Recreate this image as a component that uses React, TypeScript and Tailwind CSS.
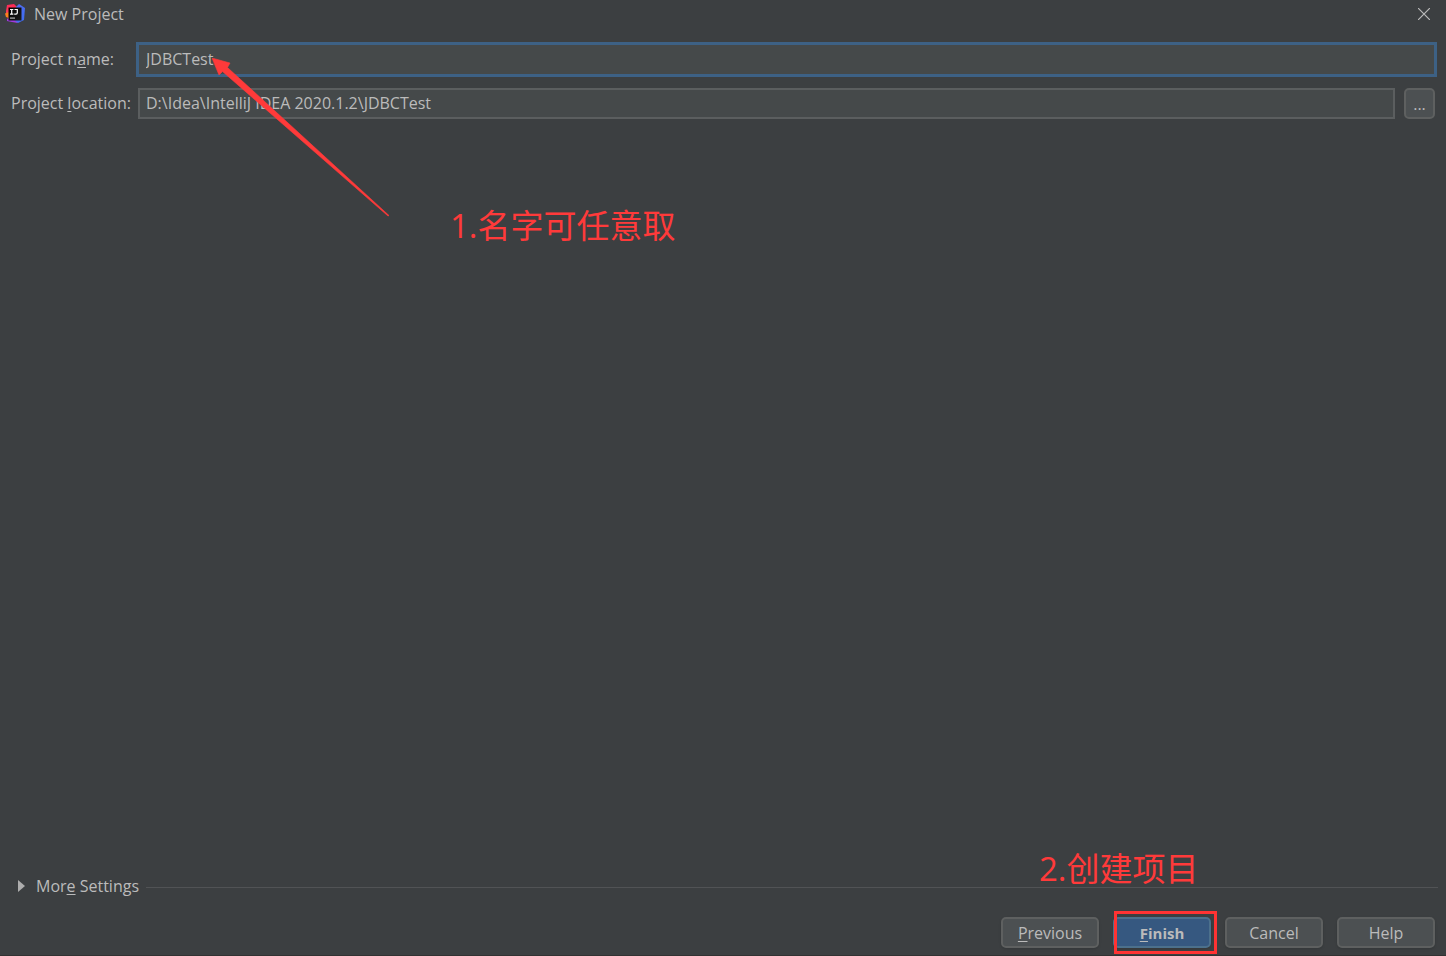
import type { ReactNode } from 'react';

function Key({ children }: { children: ReactNode }) {
  return <span className="underline decoration-1 underline-offset-2">{children}</span>;
}

function AppLogo() {
  return (
    <svg viewBox="0 0 20 20" className="size-5 shrink-0" aria-hidden="true">
      <defs>
        <linearGradient id="warm" x1="0" y1="0" x2="0" y2="1">
          <stop offset="0" stopColor="#fe2857" />
          <stop offset="0.55" stopColor="#f9405a" />
          <stop offset="1" stopColor="#a03bd8" />
        </linearGradient>
        <linearGradient id="cool" x1="0" y1="0" x2="1" y2="1">
          <stop offset="0" stopColor="#5a6cf0" />
          <stop offset="1" stopColor="#3a6cf0" />
        </linearGradient>
        <linearGradient id="tile" x1="0" y1="0" x2="1" y2="1">
          <stop offset="0" stopColor="#000" />
          <stop offset="1" stopColor="#1c1c1c" />
        </linearGradient>
      </defs>
      <path d="M2 1 9 0l4 4-2 12-9 1 1-4-2-2 0-4z" fill="url(#warm)" />
      <path d="M0 9.500 4 8v6l-3-1z" fill="#fc801d" />
      <path d="M11 3 14 0l6 4-1 12-6 3-4-2z" fill="url(#cool)" />
      <path d="M2 15h6l5 4-6-1-5-1z" fill="#a13be0" />
      <path d="M3.500 3.500h13v13h-13z" fill="url(#tile)" />
      <path d="M5 5.500h3.400M6.700 5.500v4.600M5 10.100h3.400M9.500 5.500h2.800v3.300q0 1.300-1.300 1.300H9.200" fill="none" stroke="#fff" strokeWidth="1.200" />
      <path d="M5 13.500h5v1.200H5z" fill="#b5b5b5" />
    </svg>
  );
}

function DialogButton({ children, primary = false }: { children: ReactNode; primary?: boolean }) {
  const look = primary
    ? 'border-[#4c708c] bg-[#365880] text-[15px] font-bold'
    : 'border-[#5e6060] bg-[#4c5052]';
  return (
    <button type="button" className={`h-[31px] w-[98px] rounded-[5px] border-2 leading-5 shadow-sm ${look}`}>
      {children}
    </button>
  );
}

export default function App() {
  return (
    <main className="flex min-h-screen flex-col overflow-hidden border-b border-[#323232] bg-[#3c3f41] font-['Open_Sans','Noto_Sans_CJK_SC',sans-serif] text-base leading-5 text-[#bbbbbb]">
      <header className="flex h-7 items-center pl-[5px] pr-4">
        <AppLogo />
        <h1 className="ml-[9px]">New Project</h1>
        <button type="button" aria-label="Close" className="ml-auto">
          <svg viewBox="0 0 12 12" className="size-3" aria-hidden="true">
            <path d="M0 0 12 12M12 0 0 12" stroke="#bbbbbb" strokeWidth="1.200" />
          </svg>
        </button>
      </header>

      <form className="flex flex-1 flex-col">
        <div className="relative mt-4 flex items-center pl-[11px] pr-[11px]">
          <label htmlFor="name" className="w-[127px] shrink-0 pb-0.5">
            Project n<Key>a</Key>me:
          </label>
          <input
            id="name"
            defaultValue="JDBCTest"
            className="h-[31px] min-w-0 flex-1 border border-[#466d94] bg-[#45494a] px-[7px] pb-0.5 outline-3 -outline-offset-1 outline-[#3d6185]"
          />
          <svg viewBox="0 0 178 159" className="pointer-events-none absolute left-[212px] top-[14px] z-10 h-[159px] w-[178px]" aria-hidden="true">
            <path d="M0 0 18 5 15.500 9.500 177 157.500 176 158 10.500 13.500 7 17z" fill="#ff3a3a" stroke="#ff3a3a" strokeWidth="0.600" />
          </svg>
          <p className="pointer-events-none absolute left-[450px] top-[160px] whitespace-nowrap text-[33px] leading-[44px] text-[#ff3a3a]">
            1.名字可任意取
          </p>
        </div>

        <div className="mt-[13px] flex items-center pl-[11px] pr-[11px]">
          <label htmlFor="location" className="w-[127px] shrink-0 whitespace-nowrap pb-0.5">
            Project <Key>l</Key>ocation:
          </label>
          <input
            id="location"
            defaultValue="D:\Idea\IntelliJ IDEA 2020.1.2\JDBCTest"
            className="h-[31px] min-w-0 flex-1 border-2 border-[#5b5e5f] bg-[#45494a] px-[6px] pb-0.5 outline-none"
          />
          <button
            type="button"
            aria-label="Browse"
            className="ml-[9px] h-[31px] w-[31px] rounded-[5px] border-2 border-[#5e6060] bg-[#4c5052] leading-5"
          >
            ...
          </button>
        </div>

        <div className="mt-auto flex items-center pl-[18px] pr-2">
          <button type="button" className="flex items-center pb-0.5">
            <svg viewBox="0 0 7 12" className="mr-[11px] h-3 w-[7px]" aria-hidden="true">
              <path d="M0 0 7 6 0 12z" fill="#adadad" />
            </svg>
            <span>
              Mor<Key>e</Key> Settings
            </span>
          </button>
          <hr className="ml-[7px] flex-1 border-[#515355]" />
        </div>

        <footer className="mb-[7px] mt-[19px] flex justify-end gap-[14px] pr-[11px]">
          <DialogButton>
            <Key>P</Key>revious
          </DialogButton>
          <div className="relative">
            <DialogButton primary>
              <Key>F</Key>inish
            </DialogButton>
            <div className="pointer-events-none absolute -bottom-[6px] -right-[6px] -top-[6px] left-px border-3 border-[#ff3333]" />
            <p className="pointer-events-none absolute -left-[74px] -top-[70px] whitespace-nowrap text-[33px] leading-[44px] text-[#ff3a3a]">
              2.创建项目
            </p>
          </div>
          <DialogButton>Cancel</DialogButton>
          <DialogButton>Help</DialogButton>
        </footer>
      </form>
    </main>
  );
}
